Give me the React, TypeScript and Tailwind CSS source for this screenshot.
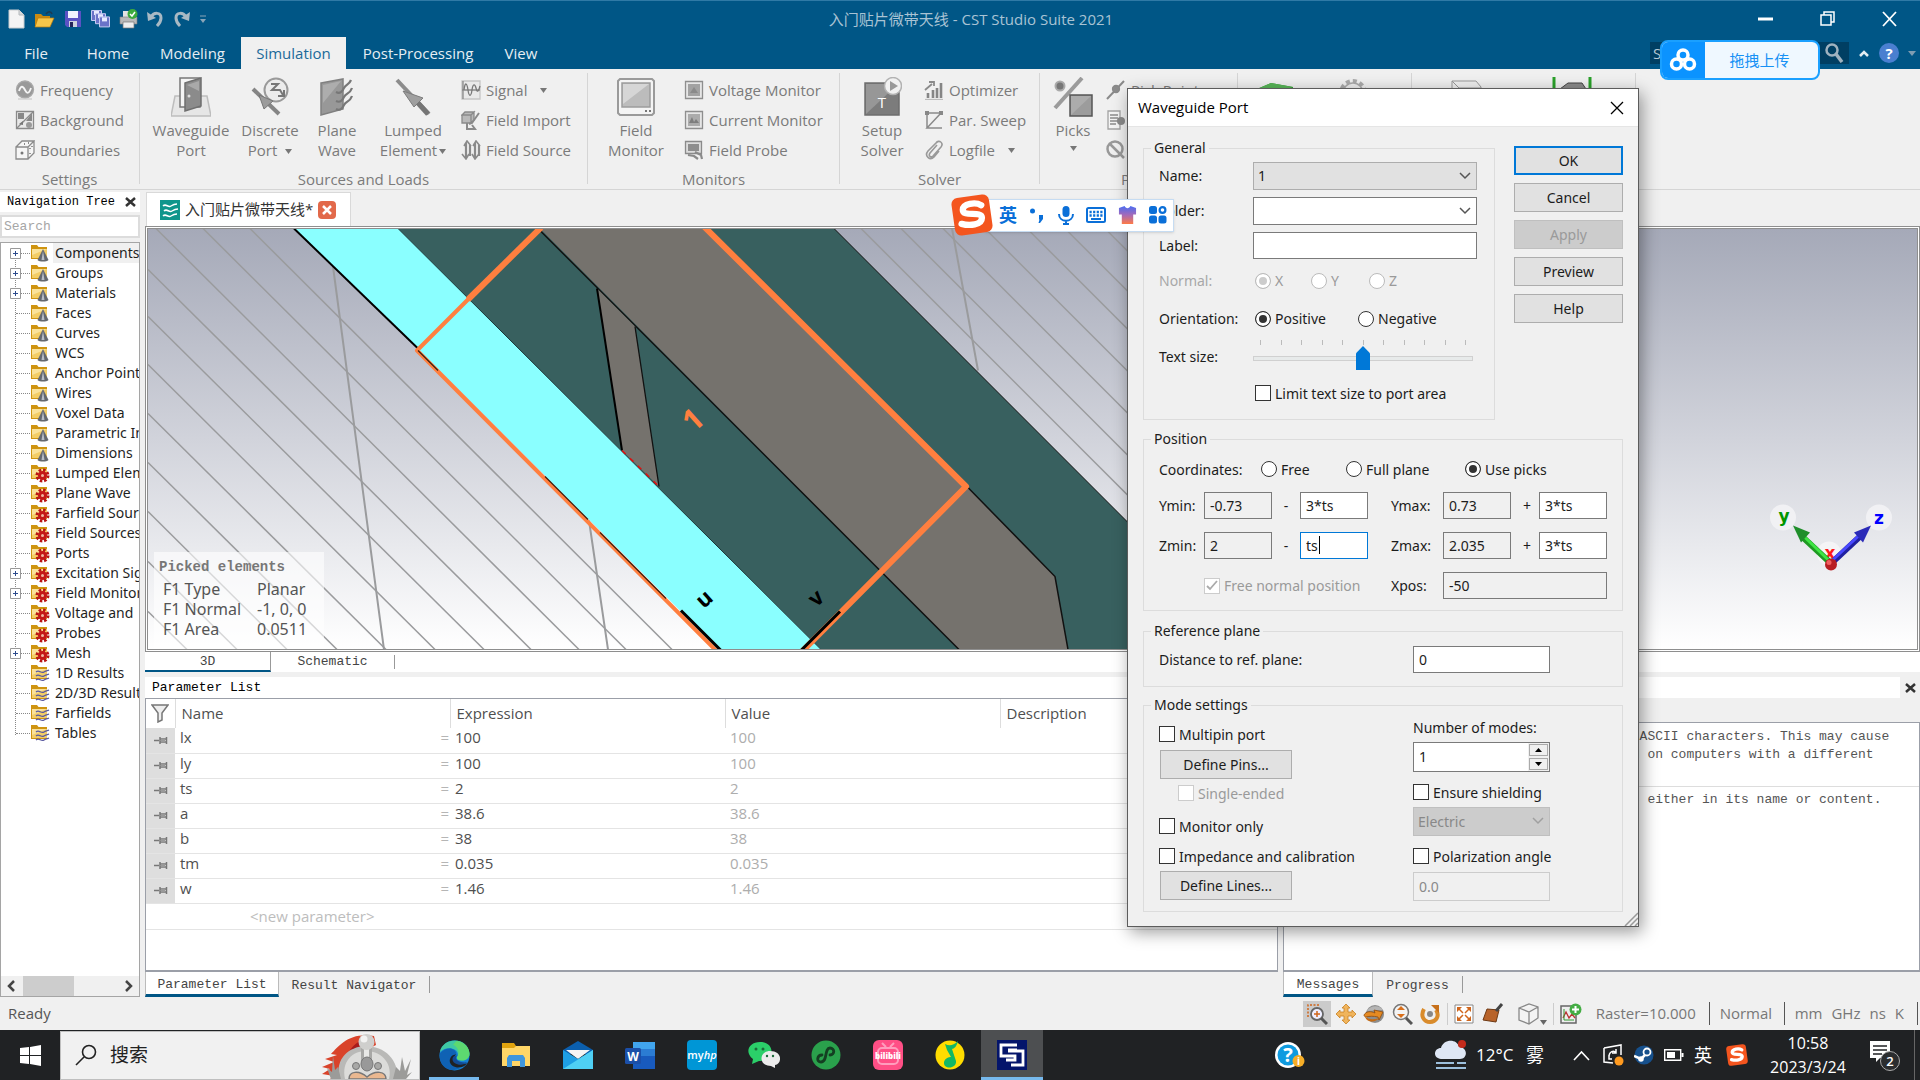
import type { ReactNode } from "react";

const UI = "font-['Open_Sans','Noto_Sans_CJK_SC',sans-serif]";
const MONO = "font-['Liberation_Mono','Noto_Sans_CJK_SC',monospace]";
const NOTO = "font-['Noto_Sans',sans-serif]";

type TreeItem = { label: string; kind: "cone" | "gear" | "wave"; open?: boolean };

const tree: TreeItem[] = [
  { label: "Components", kind: "cone", open: true },
  { label: "Groups", kind: "cone", open: true },
  { label: "Materials", kind: "cone", open: true },
  { label: "Faces", kind: "cone" },
  { label: "Curves", kind: "cone" },
  { label: "WCS", kind: "cone" },
  { label: "Anchor Points", kind: "cone" },
  { label: "Wires", kind: "cone" },
  { label: "Voxel Data", kind: "cone" },
  { label: "Parametric Int", kind: "cone" },
  { label: "Dimensions", kind: "cone" },
  { label: "Lumped Elements", kind: "gear" },
  { label: "Plane Wave", kind: "gear" },
  { label: "Farfield Source", kind: "gear" },
  { label: "Field Sources", kind: "gear" },
  { label: "Ports", kind: "gear" },
  { label: "Excitation Signals", kind: "gear", open: true },
  { label: "Field Monitors", kind: "gear", open: true },
  { label: "Voltage and", kind: "gear" },
  { label: "Probes", kind: "gear" },
  { label: "Mesh", kind: "gear", open: true },
  { label: "1D Results", kind: "wave" },
  { label: "2D/3D Results", kind: "wave" },
  { label: "Farfields", kind: "wave" },
  { label: "Tables", kind: "wave" },
];

const params = [
  ["lx", "100"],
  ["ly", "100"],
  ["ts", "2"],
  ["a", "38.6"],
  ["b", "38"],
  ["tm", "0.035"],
  ["w", "1.46"],
];

/* ---------- title bar ---------- */

function QuickAccess() {
  return (
    <div className="flex w-[230px] items-center gap-[9px] pl-2">
      <button aria-label="New">
        <svg width="17" height="20" viewBox="0 0 17 20">
          <path d="M1 1h10l5 5v13H1z" fill="#f4f4f4" stroke="#c9cdd0" />
          <path d="M11 1v5h5" fill="#d6d9db" stroke="#b5babd" />
        </svg>
      </button>
      <button aria-label="Open">
        <svg width="21" height="19" viewBox="0 0 21 19">
          <path d="M1 4h6l2 2h7v11H1z" fill="#c88a12" />
          <path d="M4 8h16l-4 9H1z" fill="#f7c64a" stroke="#b97d0c" strokeWidth=".7" />
          <path d="M12 4c2-3 5-3 6 0" fill="none" stroke="#1d3a52" strokeWidth="1.6" />
        </svg>
      </button>
      <button aria-label="Save">
        <svg width="18" height="18" viewBox="0 0 18 18">
          <path d="M1 1h16v16H3l-2-2z" fill="#5a52c4" />
          <path d="M4 1h10v7H4z" fill="#f0f2ff" />
          <path d="M5 11h8v6H5z" fill="#cfd2dd" />
          <path d="M6 12h3v5H6z" fill="#23235a" />
        </svg>
      </button>
      <button aria-label="Save all">
        <svg width="19" height="18" viewBox="0 0 19 18">
          {[0, 4, 8].map((o) => (
            <g key={o}>
              <path d={`M${o + 0.5} ${o * 0.8 + 0.5}h10v10h-10z`} fill="#6a73c8" stroke="#c5cbf2" />
              <path d={`M${o + 3} ${o * 0.8 + 1}h5v4h-5z`} fill="#e8ebff" />
            </g>
          ))}
        </svg>
      </button>
      <button aria-label="Print">
        <svg width="19" height="20" viewBox="0 0 19 20">
          <path d="M4 2h10v6H4z" fill="#e3e3e3" />
          <path d="M1 8h17v7H1z" fill="#b9b9b9" stroke="#7c7c7c" strokeWidth=".6" />
          <path d="M4 13h11v6H4z" fill="#efefef" stroke="#777" strokeWidth=".7" />
          <circle cx="13.500" cy="5" r="5" fill="#3cab3c" />
          <path d="M11 5l2 2 3-4" fill="none" stroke="#fff" strokeWidth="1.500" />
        </svg>
      </button>
      <button aria-label="Undo">
        <svg width="17" height="18" viewBox="0 0 17 18">
          <path d="M4 7C7 2 14 2 14 8c0 4-2 6-4 8" fill="none" stroke="#a9b9c4" strokeWidth="3" />
          <path d="M0 2l1 9 8-3z" fill="#a9b9c4" />
        </svg>
      </button>
      <button aria-label="Redo">
        <svg width="17" height="18" viewBox="0 0 17 18">
          <path d="M13 7C10 2 3 2 3 8c0 4 2 6 4 8" fill="none" stroke="#a9b9c4" strokeWidth="3" />
          <path d="M17 2l-1 9-8-3z" fill="#a9b9c4" />
        </svg>
      </button>
      <svg width="8" height="9" viewBox="0 0 8 9">
        <path d="M1 1h6" stroke="#8aa5b8" />
        <path d="M1 4h6l-3 4z" fill="#8aa5b8" />
      </svg>
    </div>
  );
}

function TitleBar() {
  return (
    <header className="shrink-0 border-t border-[#2f7aa6] bg-[#005686]">
      <div className="flex h-9 items-center">
        <QuickAccess />
        <h1 className="flex-1 text-center text-[15px] text-[#a9c3d4]">入门贴片微带天线 - CST Studio Suite 2021</h1>
        <div className="flex w-[208px] items-center justify-end gap-[47px] pr-[23px] text-white">
          <button aria-label="Minimize">
            <svg width="15" height="16"><path d="M0 8h15" stroke="#fff" strokeWidth="3" /></svg>
          </button>
          <button aria-label="Restore">
            <svg width="15" height="16" fill="none" stroke="#fff" strokeWidth="1.500">
              <path d="M1 4h10v10H1zM4 4V1h10v10h-3" />
            </svg>
          </button>
          <button aria-label="Close">
            <svg width="15" height="16" stroke="#fff" strokeWidth="1.800"><path d="M1 1l13 14M14 1L1 15" /></svg>
          </button>
        </div>
      </div>
      <div className="flex h-8 items-center">
        <nav className="flex h-full flex-1 text-[15px] text-[#e6eef3]">
          <button className="w-[72px]">File</button>
          <button className="w-[72px]">Home</button>
          <button className="w-[97px]">Modeling</button>
          <button className="w-[105px] bg-[#f0f0f0] text-[#1b6a99]">Simulation</button>
          <button className="w-36">Post-Processing</button>
          <button className="w-[62px]">View</button>
        </nav>
        <div className="flex items-center gap-[9px] pr-1">
          <div className="flex h-[22px] w-[199px] items-center justify-between bg-[#003f63] px-[3px] text-[15px] text-[#b5c9d6]">
            <span>S</span>
            <svg width="22" height="20" viewBox="0 0 22 20" fill="none" stroke="#9fb2bf">
              <circle cx="8" cy="7" r="5.500" strokeWidth="2.500" />
              <path d="M12 11l6 8" strokeWidth="3.500" />
            </svg>
          </div>
          <svg width="12" height="9" viewBox="0 0 12 9"><path d="M2 7l4-4 4 4" fill="none" stroke="#e4edf2" strokeWidth="2.500" /></svg>
          <button aria-label="Help" className="flex h-5 w-5 items-center justify-center rounded-full bg-[#4a7fd0] text-[15px] font-bold text-white">?</button>
          <svg width="8" height="5"><path d="M0 0h8l-4 5z" fill="#7e9db2" /></svg>
        </div>
      </div>
    </header>
  );
}

/* ---------- ribbon ---------- */

const icon18 = { width: 20, height: 20, viewBox: "0 0 20 20", fill: "none", stroke: "#8a8a8a", strokeWidth: 1.3 };
const icon40 = { width: 40, height: 40, viewBox: "0 0 40 40", fill: "none", stroke: "#8a8a8a", strokeWidth: 1.5 };

const I = {
  frequency: (
    <svg {...icon18}>
      <circle cx="10" cy="9.500" r="8.500" fill="#999" stroke="#a8a8a8" />
      <path d="M4 11c2-6 4-5 6-1s4 4 6-2" stroke="#f4f4f4" strokeWidth="1.800" />
      <path d="M3 19h14" stroke="#ccc" />
    </svg>
  ),
  background: (
    <svg {...icon18}>
      <path d="M1.500 1.500h17v17h-17z" fill="#e8e8e8" />
      <path d="M3 3h6v6H3zM11 11l6-8v8z" fill="#888" stroke="none" />
      <path d="M2 18L18 2" />
      <circle cx="14" cy="15" r="3" fill="#999" stroke="none" />
      <path d="M4 14l4-3v4z" fill="#777" stroke="none" />
    </svg>
  ),
  boundaries: (
    <svg {...icon18}>
      <path d="M1 7h12v12H1zM1 7l6-6h12l-6 6M19 1v12l-6 6" fill="#f6f6f6" />
      <circle cx="7" cy="13" r="1.500" fill="#777" stroke="none" />
      <path d="M15 8v1M17 6v1M9 4h1M13 3h1M15 13v1" strokeWidth="1.800" />
    </svg>
  ),
  signal: (
    <svg {...icon18}>
      <path d="M1 1h18v18H1z" fill="#e9e9e9" stroke="#c5c5c5" />
      <path d="M2 1v18M1 10h18" />
      <path d="M3 10c1-9 3-7 4 0s3 7 4 0 3-6 4-2 2 5 4-2" stroke="#777" />
    </svg>
  ),
  fieldImport: (
    <svg {...icon18}>
      <path d="M1 5l3-3h9l-3 3zM1 5h9v8H1zM10 5l3-3v8l-3 3" fill="#b9b9b9" />
      <path d="M6 13v6h8l-3-4M18 3l-7 10-3 1" stroke="#8a8a8a" strokeWidth="2" />
    </svg>
  ),
  fieldSource: (
    <svg {...icon18}>
      <path d="M5 18V3M14 18V3M9 16V5M18 16V5" strokeWidth="2.200" />
      <path d="M1 14l4 5 3-5M11 14l3 5 4-5M3 6l3-5 4 5M12 6l3-5 4 5" strokeWidth="1.600" />
    </svg>
  ),
  voltage: (
    <svg {...icon18}>
      <path d="M1.500 1.500h17v17h-17z" fill="#e6e6e6" stroke="#8e8e8e" />
      <path d="M4 4h12v12H4z" fill="#a2a2a2" stroke="none" />
      <path d="M6 13l4-6 4 6z" fill="#8a8a8a" stroke="none" />
    </svg>
  ),
  current: (
    <svg {...icon18}>
      <path d="M1.500 1.500h17v17h-17z" fill="#e6e6e6" stroke="#8e8e8e" />
      <path d="M4 4h12v12H4z" fill="#ababab" stroke="none" />
      <path d="M5 13l3-6 2 5 2-3 3 4z" fill="#7d7d7d" stroke="none" />
    </svg>
  ),
  probe: (
    <svg {...icon18}>
      <path d="M1.500 1.500h16v12h-16z" fill="#dcdcdc" />
      <path d="M4 4h11v7H4z" fill="#8d8d8d" stroke="none" />
      <path d="M4 15l6 1 4 3M11 12l6 3 1 4" strokeWidth="2.200" />
    </svg>
  ),
  optimizer: (
    <svg {...icon18}>
      <path d="M4 18v-5M9 18v-8M13 18V8M17 18V3" strokeWidth="2.600" stroke="#858585" />
      <path d="M1 10l7-6M5 2h5v4" strokeWidth="1.800" />
      <path d="M1 19.500h18" stroke="#bbb" />
    </svg>
  ),
  sweep: (
    <svg {...icon18}>
      <path d="M3 18V3h14L3 18h15" strokeWidth="1.500" />
      <path d="M1 1h4v4H1zM15 1h4v4h-4z" fill="#888" stroke="none" />
    </svg>
  ),
  logfile: (
    <svg {...icon18}>
      <path d="M13 5L6 13c-2 3 1 5 3 3l8-9c3-4-2-8-5-4L4 11c-4 5 2 10 6 6l5-6" stroke="#999" strokeWidth="1.600" />
    </svg>
  ),
  pickPoints: (
    <svg {...icon18}>
      <path d="M1 19L18 1" strokeWidth="2" />
      <circle cx="10" cy="9" r="3.500" fill="#8c8c8c" />
    </svg>
  ),
  pickLists: (
    <svg {...icon18}>
      <path d="M2 1h12v18H2z" fill="#f4f4f4" stroke="#a2a2a2" />
      <path d="M4 5h8M4 8h8M4 11h8M4 14h6" />
      <circle cx="15" cy="11" r="4" fill="#8a8a8a" stroke="none" />
    </svg>
  ),
  clearPicks: (
    <svg {...icon18}>
      <circle cx="9" cy="9" r="7.500" strokeWidth="2.500" stroke="#999" />
      <path d="M4 4l14 14" strokeWidth="2.500" stroke="#999" />
    </svg>
  ),
  waveguide: (
    <svg {...icon40}>
      <path d="M4 19h32l4 20H0z" fill="#e6e6e6" stroke="#bdbdbd" />
      <path d="M9 1h20v29H9z" fill="#f4f4f4" stroke="#777" />
      <path d="M14 6L30 1v28l-16 5z" fill="#8b8b8b" stroke="#6f6f6f" />
      <path d="M16 8l12-4v10z" fill="#a9a9a9" stroke="none" />
      <circle cx="18" cy="19" r="1.500" fill="#ddd" stroke="none" />
    </svg>
  ),
  discrete: (
    <svg {...icon40}>
      <circle cx="26" cy="13" r="11.500" fill="#ececec" stroke="#9a9a9a" strokeWidth="2" />
      <path d="M21 7h7l-6 6h8l3 5M34 13v6h-6" strokeWidth="2" stroke="#777" />
      <path d="M3 12l26 25" stroke="#858585" strokeWidth="4" />
      <path d="M9 18l14 6-9 8z" fill="#9b9b9b" stroke="#777" strokeWidth="1" />
    </svg>
  ),
  plane: (
    <svg {...icon40}>
      <path d="M4 6l22-4v30L4 38z" fill="#989898" stroke="#808080" />
      <path d="M6 8l18-4L6 26z" fill="#adadad" stroke="none" />
      <path d="M19 15c4 2 6 0 8-4s5-3 7-8M19 24c4 2 6 0 8-4s6-3 8-9M19 32c4 2 6 0 8-4s6-3 8-9" strokeWidth="2.200" stroke="#777" />
    </svg>
  ),
  lumped: (
    <svg {...icon40}>
      <path d="M4 3l32 34" stroke="#8c8c8c" strokeWidth="4" />
      <path d="M10 14l20 7-9 9z" fill="#9f9f9f" stroke="#7c7c7c" strokeWidth="1" />
      <path d="M25 26l10 11" stroke="#757575" strokeWidth="5" />
    </svg>
  ),
  fieldMonitor: (
    <svg {...icon40}>
      <path d="M4 2h32l2 2v32l-2 2H4l-2-2V4z" fill="#f4f4f4" stroke="#9a9a9a" strokeWidth="2" />
      <path d="M6 6h28v24H6z" fill="#bcbcbc" stroke="#9c9c9c" />
      <path d="M7 7h26L7 27z" fill="#d6d6d6" stroke="none" />
      <path d="M29 34h2M33 34h2" stroke="#777" strokeWidth="2" />
    </svg>
  ),
  picks: (
    <svg {...icon40}>
      <path d="M2 31L29 1" stroke="#9b9b9b" strokeWidth="4" />
      <circle cx="7" cy="9" r="4.500" fill="#777" stroke="#aaa" strokeWidth="2" />
      <path d="M17 18h22v21H17z" fill="#9c9c9c" stroke="#555" />
      <path d="M18 19h20L18 38z" fill="#acacac" stroke="none" />
    </svg>
  ),
};

const Caret = () => (
  <svg width="7" height="5" className="ml-2 inline-block align-middle">
    <path d="M0 0h7l-3.500 5z" fill="#777" />
  </svg>
);

function Small({ icon, children, caret }: { icon: ReactNode; children: ReactNode; caret?: boolean }) {
  return (
    <button className="flex h-[30px] items-center gap-[5px] whitespace-nowrap">
      {icon}
      <span>{children}</span>
      {caret && <Caret />}
    </button>
  );
}

function Big({ icon, className, children }: { icon: ReactNode; className: string; children: ReactNode }) {
  return (
    <button className={`flex flex-col items-center pt-0.5 leading-5 ${className}`}>
      {icon}
      <span className="mt-[3px]">{children}</span>
    </button>
  );
}

function Group({ label, className, children }: { label: string; className: string; children?: ReactNode }) {
  return (
    <section className={`flex h-[111px] shrink-0 flex-col border-r border-[#d5d5d5] pt-0.5 ${className}`}>
      <div className="flex h-[90px] items-start">{children}</div>
      <h2 className="text-center leading-7">{label}</h2>
    </section>
  );
}

function Ribbon() {
  return (
    <div className="flex h-[121px] shrink-0 overflow-hidden border-b border-[#d5d5d5] pt-1 text-[15px] text-[#7b7b7b]">
      <Group label="Settings" className="w-[140px]">
        <div className="pl-[15px] pr-2">
          <Small icon={I.frequency}>Frequency</Small>
          <Small icon={I.background}>Background</Small>
          <Small icon={I.boundaries}>Boundaries</Small>
        </div>
      </Group>
      <Group label="Sources and Loads" className="w-[448px]">
        <div className="w-[9px]" />
        <Big icon={I.waveguide} className="w-[84px]">Waveguide<br />Port</Big>
        <Big icon={I.discrete} className="w-[74px]">Discrete<br />Port<Caret /></Big>
        <Big icon={I.plane} className="w-[60px]">Plane<br />Wave</Big>
        <Big icon={I.lumped} className="w-[92px]">Lumped<br />Element<svg width="7" height="5" className="ml-0.5 inline-block align-middle"><path d="M0 0h7l-3.500 5z" fill="#777" /></svg></Big>
        <div className="pl-0.5">
          <Small icon={I.signal} caret>Signal</Small>
          <Small icon={I.fieldImport}>Field Import</Small>
          <Small icon={I.fieldSource}>Field Source</Small>
        </div>
      </Group>
      <Group label="Monitors" className="w-[252px]">
        <Big icon={I.fieldMonitor} className="ml-2 w-20">Field<br />Monitor</Big>
        <div className="pl-2">
          <Small icon={I.voltage}>Voltage Monitor</Small>
          <Small icon={I.current}>Current Monitor</Small>
          <Small icon={I.probe}>Field Probe</Small>
        </div>
      </Group>
      <Group label="Solver" className="w-[200px]">
        <Big
          className="ml-[7px] w-[70px]"
          icon={
            <svg {...icon40}>
              <path d="M3 6h34v32H3z" fill="#7c7c7c" stroke="#6e6e6e" />
              <path d="M4 7h32L4 37z" fill="#979797" stroke="none" />
              <text x="20" y="31" textAnchor="middle" fontSize="15" fill="#fff" stroke="none">T</text>
              <circle cx="31" cy="9" r="8.500" fill="#f1f1f1" stroke="#b2b2b2" />
              <path d="M28 4l8 5-8 5z" fill="#999" stroke="none" />
            </svg>
          }
        >
          Setup<br />Solver
        </Big>
        <div className="pl-[7px]">
          <Small icon={I.optimizer}>Optimizer</Small>
          <Small icon={I.sweep}>Par. Sweep</Small>
          <Small icon={I.logfile} caret>Logfile</Small>
        </div>
      </Group>
      <Group label="Picks" className="w-[198px]">
        <Big icon={I.picks} className="ml-1.5 w-[54px]">
          Picks<br />
          <svg width="7" height="5" className="mx-auto mt-1.5"><path d="M0 0h7l-3.500 5z" fill="#777" /></svg>
        </Big>
        <div className="pl-1.5">
          <Small icon={I.pickPoints} caret>Pick Points</Small>
          <Small icon={I.pickLists}>Pick Lists</Small>
          <Small icon={I.clearPicks}>Clear Picks</Small>
        </div>
      </Group>
      <Group label="" className="w-[174px]">
        <svg width="160" height="40" viewBox="0 0 160 40" className="mt-0.5">
          <path d="M19 12l14-6 22 4v20H19z" fill="#2f9a2f" />
          <path d="M19 12l14-6 22 4-14 4z" fill="#58b558" />
          <circle cx="115" cy="16" r="12" fill="#eee" stroke="#aaa" strokeWidth="4" strokeDasharray="4 3" />
          <circle cx="115" cy="16" r="10" fill="#eee" stroke="#aaa" strokeWidth="1.500" />
        </svg>
      </Group>
      <Group label="" className="w-[224px]">
        <svg width="200" height="40" viewBox="0 0 200 40" className="mt-0.5">
          <path d="M40 4h24l5 6v20H40zM40 4l7 7h22M47 11v20" fill="#eee" stroke="#999" />
          <path d="M142 0v30M178 0v30" stroke="#2aa02a" strokeWidth="3" />
          <path d="M148 12l8-6h14l4 6v10h-26z" fill="#8b8b8b" stroke="#444" />
        </svg>
      </Group>
    </div>
  );
}

/* ---------- navigation tree ---------- */

function TreeIcon({ kind }: { kind: TreeItem["kind"] }) {
  return (
    <svg width="20" height="20" viewBox="0 0 20 20" className="shrink-0">
      <path d="M1 2h6l1.500 2H17v12H1z" fill="#cf9410" />
      <path d="M2 6h15v9H2z" fill="#f3cd66" />
      <path d="M2 6h15L2 12z" fill="#fae29a" />
      {kind === "cone" && (
        <>
          <path d="M13 6l5.500 11c-2 2-9 2-11 0z" fill="#65696f" />
          <path d="M13 8l1.500 9h-3z" fill="#b9bec6" />
        </>
      )}
      {kind === "gear" && (
        <>
          <circle cx="12.500" cy="12.500" r="5.500" fill="none" stroke="#b81414" strokeWidth="3" strokeDasharray="2.500 1.800" />
          <circle cx="12.500" cy="12.500" r="4.500" fill="#c41818" />
          <circle cx="12.500" cy="12.500" r="1.500" fill="#f0b8a0" />
        </>
      )}
      {kind === "wave" && (
        <path d="M6 9c3-3 5 2 8 0s3-1 5-2M6 13c3-3 5 2 8 0s3-1 5-2M6 17c3-3 5 2 8 0s3-1 5-2" fill="none" stroke="#5a5aa0" strokeWidth="1.300" />
      )}
    </svg>
  );
}

function NavigationTree() {
  return (
    <aside className="flex w-[140px] shrink-0 flex-col">
      <div className="mt-0.5 flex h-5 items-center justify-between bg-white pl-[7px] pr-1 text-[12px] text-black">
        <h2 className={`whitespace-nowrap font-medium ${MONO}`}>Navigation Tree</h2>
        <button aria-label="Close navigation tree">
          <svg width="11" height="10" stroke="#333" strokeWidth="2.500"><path d="M1 1l9 8M10 1L1 9" /></svg>
        </button>
      </div>
      <input
        aria-label="Search tree"
        placeholder="Search"
        className={`mt-[3px] h-[23px] w-full border-2 border-[#dcdcdc] bg-white px-[2px] text-[13px] placeholder:text-[#a6a6a6] ${MONO}`}
      />
      <div className="mt-1 flex min-h-0 flex-1 flex-col border border-[#a5a5a5] bg-white">
        <ul className={`relative flex-1 overflow-hidden text-[14px] text-[#1f1f1f] ${NOTO}`}>
          <li aria-hidden className="absolute left-[14px] top-3 h-[480px] border-l border-dotted border-[#888]" />
          {tree.map((t, i) => (
            <li key={t.label} className="relative flex h-5 items-center whitespace-nowrap pl-[9px]">
              <span className="flex w-5 shrink-0 items-center">
                {t.open ? (
                  <svg width="11" height="11" viewBox="0 0 11 11">
                    <path d="M.5.5h10v10H.500z" fill="#fff" stroke="#999" />
                    <path d="M3 5.500h5M5.500 3v5" stroke="#2c4a8c" />
                  </svg>
                ) : (
                  <span className="w-[6px]" />
                )}
                <span className="h-px flex-1 border-t border-dotted border-[#888]" />
              </span>
              <TreeIcon kind={t.kind} />
              <span className={i === 0 ? "ml-[3px] bg-[#f0f0f0] pl-0.5 leading-5" : "pl-[5px] leading-5"}>{t.label}</span>
            </li>
          ))}
        </ul>
        <div className="flex h-5 items-center bg-[#f0f0f0] px-1.5">
          <svg width="8" height="12" fill="none" stroke="#444" strokeWidth="2.500"><path d="M7 1L2 6l5 5" /></svg>
          <div className="ml-2 h-full w-[51px] bg-[#cdcdcd]" />
          <div className="flex-1" />
          <svg width="8" height="12" fill="none" stroke="#444" strokeWidth="2.500"><path d="M1 1l5 5-5 5" /></svg>
        </div>
      </div>
    </aside>
  );
}

/* ---------- 3D view ---------- */

// left edge / bottom edge pairs of the ground grid
const gridLeft = [
  [148, 611, 187], [148, 561, 237], [148, 511, 287], [148, 462, 337], [148, 413, 386], [148, 364, 435],
  [148, 316, 484], [148, 269, 531], [156, 228, 579], [203, 228, 626], [250, 228, 672],
];
const gridRight = [861, 901, 943, 985, 1027, 1065, 1105];

function Scene() {
  return (
    <svg className="absolute inset-0 h-full w-full" viewBox="148 228 1769 421" preserveAspectRatio="xMidYMid slice">
      <defs>
        <linearGradient id="sky" x1="0" y1="0" x2="0" y2="1">
          <stop offset="0" stopColor="#a5a9b8" />
          <stop offset=".5" stopColor="#d1d3db" />
          <stop offset="1" stopColor="#ffffff" />
        </linearGradient>
      </defs>
      <rect x="148" y="228" width="1769" height="421" fill="url(#sky)" />
      <g stroke="#9a9b9d" strokeWidth="1.500">
        {gridLeft.map(([x, y, b]) => (
          <line key={b} x1={x} y1={y} x2={b} y2="649" />
        ))}
        {gridRight.map((x) => (
          <line key={x} x1={x} y1="228" x2={x + 421} y2="649" />
        ))}
        <path d="M333 266L384 649M952 228l26 142M589 520l19 129" strokeWidth="2" fill="none" />
      </g>
      <path d="M398 228H834L1255 649H821z" fill="#38605f" />
      <path d="M834 228L1255 649" stroke="#111" fill="none" />
      <path d="M540 228H707L966 485L1055 576L1068 649H959z" fill="#75726d" />
      <path d="M540 230L959 649M966 485L1055 576L1068 649" stroke="#111" strokeWidth="1.500" fill="none" />
      <path d="M597 288L635 326L659 486L622 450z" fill="#75726d" />
      <path d="M597 288L622 450" stroke="#000" strokeWidth="2" />
      <path d="M635 326L659 486" stroke="#111" strokeWidth="1.300" />
      <path d="M294 228H398L821 649H719L418 348z" fill="#8affff" />
      <path d="M398 228L821 649" stroke="#163838" fill="none" />
      <path d="M294 228L418 348" stroke="#000" strokeWidth="2" />
      <path d="M622 450l37 36" stroke="#e01010" strokeWidth="1.500" strokeDasharray="5 6" />
      <g stroke="#ff7f3f" fill="none" strokeLinejoin="round">
        <path d="M541 227L468 299" strokeWidth="6" />
        <path d="M470 297L417 350L718 652" strokeWidth="4" />
        <path d="M704 226L966 486L802 651" strokeWidth="6" />
      </g>
      <path d="M418 350l20 20M545 476l43 43M600 532l66 66" stroke="#3a2010" strokeWidth="1.200" />
      <path d="M681 610l40 40M840 611L801 650" stroke="#000" strokeWidth="3" />
      <g fontFamily="Noto Sans, sans-serif" fontWeight="700" textAnchor="middle">
        <text x="700" y="427" fontSize="30" fill="#ff7f3f" transform="rotate(-42 700 427)">1</text>
        <text x="709" y="604" fontSize="22" transform="rotate(-42 709 604)">u</text>
        <text x="821" y="603" fontSize="22" transform="rotate(-42 821 603)">v</text>
      </g>
      <g fontFamily="DejaVu Sans, sans-serif" fontWeight="700" fontSize="17" textAnchor="middle">
        <circle cx="1783" cy="517" r="13" fill="#f1f1f4" />
        <circle cx="1879" cy="517" r="13" fill="#f1f1f4" />
        <circle cx="1829" cy="553" r="12" fill="#f4f4f6" />
        <text x="1784" y="521" fill="#009600">y</text>
        <text x="1879" y="523" fill="#0000ff">z</text>
        <text x="1830" y="558" fill="#ff1a1a">x</text>
      </g>
      <path d="M1831 563L1802 536" stroke="#1e9a22" strokeWidth="6" />
      <path d="M1831 562L1803 535" stroke="#3fe544" strokeWidth="3" />
      <path d="M1793 525l17 7-9 10z" fill="#1f8e2a" />
      <path d="M1831 563l29-27" stroke="#2020a0" strokeWidth="6" />
      <path d="M1830 562l29-27" stroke="#4848ff" strokeWidth="3" />
      <path d="M1871 525l-17 7 9 10z" fill="#2a2ab8" />
      <circle cx="1831" cy="564" r="6" fill="#b81f24" />
      <circle cx="1829" cy="562" r="2.500" fill="#f06060" />
    </svg>
  );
}

function Viewport() {
  return (
    <div className="flex min-h-0 flex-1 flex-col">
      <div className="flex h-9 items-end">
        <div className="ml-px flex h-[34px] w-[205px] items-center gap-[5px] border border-b-0 border-[#d9d9d9] bg-white pl-[13px] text-[#333]">
          <svg width="20" height="20" viewBox="0 0 20 20">
            <path d="M0 0h20v20H0z" fill="#0f968c" />
            <path d="M3 6c3-3 5 2 8 0s3-2 6-2M4 11c3-3 5 2 8 0s3-2 6-2M3 16c3-3 5 2 8 0s3-2 6-2" fill="none" stroke="#fff" strokeWidth="1.500" />
          </svg>
          <span className="whitespace-nowrap text-[15px]">入门贴片微带天线*</span>
          <button aria-label="Close document" className="rounded-sm bg-[#e2694a]">
            <svg width="18" height="18" stroke="#fff" strokeWidth="2.500"><path d="M5 5l8 8M13 5l-8 8" /></svg>
          </button>
        </div>
      </div>
      <div className="relative min-h-0 flex-1 overflow-hidden border-[3px] border-double border-[#8e8e8e] bg-white">
        <Scene />
        <div className="absolute bottom-0 left-1.5 w-[170px] bg-white/60 pb-2.5 pl-[5px] pt-[5px] text-[#555]">
          <h3 className={`text-[14px] font-bold leading-5 text-[#777] ${MONO}`}>Picked elements</h3>
          <dl className={`grid grid-cols-[94px_1fr] pl-1 pt-0.5 text-[16px] leading-5 ${NOTO}`}>
            <dt>F1 Type</dt><dd>Planar</dd>
            <dt>F1 Normal</dt><dd>-1, 0, 0</dd>
            <dt>F1 Area</dt><dd>0.0511</dd>
          </dl>
        </div>
      </div>
      <div className={`flex h-5 shrink-0 bg-white text-[13px] text-[#444] ${MONO}`}>
        <button className="w-[126px] border-b-2 border-r border-b-[#005686] border-r-[#999]">3D</button>
        <button className="my-[3px] w-[124px] border-r border-[#999] text-center leading-[14px]">Schematic</button>
      </div>
    </div>
  );
}

/* ---------- docked panels ---------- */

function ParameterPanel() {
  return (
    <section className="flex w-[1133px] shrink-0 flex-col">
      <h2 className={`h-[21px] bg-white pl-[7px] text-[13px] leading-[22px] text-black ${MONO}`}>Parameter List</h2>
      <div className="flex-1 border border-b-2 border-[#9b9fa8] bg-white">
        <table className="w-full table-fixed border-collapse text-left text-[15px] text-[#4f4f4f]">
          <colgroup>
            <col className="w-[29px]" />
            <col className="w-[275px]" />
            <col className="w-[275px]" />
            <col className="w-[275px]" />
            <col />
          </colgroup>
          <thead>
            <tr className="h-[29px]">
              <th aria-label="Filter" className="border-r border-[#ddd] pl-[5px]">
                <svg width="18" height="19" viewBox="0 0 18 19"><path d="M1 1h16l-6 8v7l-4 2V9z" fill="#eee" stroke="#777" strokeWidth="1.500" /></svg>
              </th>
              <th className="border-r border-[#ddd] pl-[6px] font-normal">Name</th>
              <th className="border-r border-[#ddd] pl-[6px] font-normal">Expression</th>
              <th className="border-r border-[#ddd] pl-[6px] font-normal">Value</th>
              <th className="pl-[6px] font-normal">Description</th>
            </tr>
          </thead>
          <tbody>
            {params.map(([name, value]) => (
              <tr key={name} className="h-[25px] border-b border-[#e4e4e4] leading-[18px]">
                <td className="bg-[#dedede] pl-2">
                  <svg width="14" height="9" viewBox="0 0 14 9"><path d="M0 4.500h5M6 1v7M6 3h6M6 6h6M12.500 1v7" stroke="#777" strokeWidth="1.500" fill="none" /><path d="M7 3h4v3H7z" fill="#999" /></svg>
                </td>
                <td className="pb-1.5 pl-[5px]">
                  <span className="flex justify-between pr-px"><span>{name}</span><span className="text-[#b5b5b5]">=</span></span>
                </td>
                <td className="pb-1.5 pl-[5px]">{value}</td>
                <td className="pb-1.5 pl-[5px] text-[#adadad]">{value}</td>
                <td />
              </tr>
            ))}
            <tr className="h-[26px] border-b border-[#e4e4e4] leading-5 text-[#bdbdbd]">
              <td />
              <td className="pl-[75px]">&lt;new parameter&gt;</td>
              <td /><td /><td />
            </tr>
          </tbody>
        </table>
      </div>
      <div className={`flex h-[25px] text-[13px] text-[#444] ${MONO}`}>
        <button className="w-[134px] border-x border-b-[3px] border-b-[#005686] border-x-[#bbb] bg-white pt-[3px]">Parameter List</button>
        <button className="my-1 w-[151px] border-r border-[#999] font-medium">Result Navigator</button>
      </div>
    </section>
  );
}

function MessagePanel() {
  return (
    <section className={`flex min-w-0 flex-1 flex-col text-[13px] ${MONO}`}>
      <div className="flex h-[21px] items-center">
        <div className="h-full flex-1 bg-white" />
        <button aria-label="Close messages" className="w-5 pl-[5px]">
          <svg width="11" height="10" stroke="#333" strokeWidth="2.500"><path d="M1 1l9 8M10 1L1 9" /></svg>
        </button>
      </div>
      <div className="mt-6 flex-1 overflow-hidden border border-b-2 border-[#9b9fa8] bg-white pt-[5px] leading-[18px] text-[#555]">
        <p className="whitespace-pre border-b border-[#ddd] pb-[22px] pl-[340px]">{"  ASCII characters. This may cause\n d on computers with a different"}</p>
        <p className="whitespace-pre pl-[340px] pt-1">{"rs either in its name or content."}</p>
      </div>
      <div className="flex h-[25px] text-[#444]">
        <button className="w-[90px] border-x border-b-[3px] border-b-[#005686] border-x-[#bbb] bg-white pt-[3px]">Messages</button>
        <button className="my-1 w-[90px] border-r border-[#999]">Progress</button>
      </div>
    </section>
  );
}

function StatusBar() {
  return (
    <footer className="flex h-[33px] shrink-0 items-center pl-2 text-[15px] text-[#777]">
      <span className="flex-1 text-[#555]">Ready</span>
      <div className="flex items-center gap-1">
        <button aria-label="Zoom" className="flex h-[26px] w-7 items-center justify-center bg-[#cbcbcb]">
          <svg width="22" height="22" viewBox="0 0 22 22">
            <path d="M2 14V2h12" fill="none" stroke="#d0661c" strokeWidth="1.500" strokeDasharray="2 1.500" />
            <circle cx="11" cy="11" r="6" fill="#eef" stroke="#666" strokeWidth="1.800" />
            <path d="M15 15l6 6" stroke="#555" strokeWidth="3" />
            <path d="M8 11h6M11 8v6" stroke="#d0661c" strokeWidth="1.500" />
          </svg>
        </button>
        <button aria-label="Pan">
          <svg width="22" height="22" viewBox="0 0 22 22" fill="#f0b45c" stroke="#c98222" strokeWidth=".8">
            <path d="M11 1l4 4h-2v4h4V7l4 4-4 4v-2h-4v4h2l-4 4-4-4h2v-4H5v2l-4-4 4-4v2h4V5H7z" />
          </svg>
        </button>
        <button aria-label="Rotate" className="ml-0.5">
          <svg width="22" height="22" viewBox="0 0 22 22">
            <circle cx="12" cy="11" r="9" fill="#8d8d8d" />
            <path d="M4 8c3-6 13-6 16-1z" fill="#b5b5b5" />
            <path d="M1 12c2-4 7-4 11-2l-1-3 9 2-4 8-1-3c-5-1-8-1-12 0-1 0-2-1-2-2z" fill="#e58a22" stroke="#8e4a0d" strokeWidth=".8" />
            <path d="M2 13c3 4 9 4 14 2-3 5-13 5-14-2z" fill="#c46c16" />
          </svg>
        </button>
        <button aria-label="Dynamic zoom" className="ml-0.5">
          <svg width="22" height="22" viewBox="0 0 22 22">
            <circle cx="10" cy="9" r="7.500" fill="#f3f3f3" stroke="#777" strokeWidth="1.500" />
            <path d="M15 15l6 6" stroke="#555" strokeWidth="3" />
            <path d="M10 3l4 4H6zM10 15l4-4H6z" fill="#d86f1b" />
          </svg>
        </button>
        <button aria-label="Rotate view" className="ml-0.5">
          <svg width="22" height="22" viewBox="0 0 22 22">
            <path d="M5 6c-4 7 0 13 6 13s10-6 6-12" fill="none" stroke="#d98b2b" strokeWidth="4" />
            <path d="M12 2h8v8z" fill="#c7701a" />
            <circle cx="11" cy="11" r="3" fill="#888" />
          </svg>
        </button>
        <span className="mx-0.5 h-[22px] w-px bg-[#ccc]" />
        <button aria-label="Fit">
          <svg width="20" height="20" viewBox="0 0 20 20">
            <path d="M1 1h18v18H1z" fill="#fff" stroke="#888" />
            <path d="M3 3h5L3 8zM17 3h-5l5 5zM3 17h5l-5-5zM17 17h-5l5-5z" fill="#d0661c" />
            <path d="M5 5l4 4M15 5l-4 4M5 15l4-4M15 15l-4-4" stroke="#d0661c" strokeWidth="1.500" />
          </svg>
        </button>
        <button aria-label="Working plane" className="ml-1">
          <svg width="22" height="22" viewBox="0 0 22 22">
            <path d="M5 6l12 1-3 12-13-2z" fill="#b8632a" stroke="#6d3813" />
            <path d="M14 8l6-7" stroke="#444" strokeWidth="3" />
          </svg>
        </button>
        <button aria-label="View mode" className="ml-2.5 flex items-end">
          <svg width="22" height="22" viewBox="0 0 22 22" fill="#f4f4f4" stroke="#888" strokeWidth="1.300">
            <path d="M1 5l10-4 9 3v11l-9 6-10-4zM1 5l10 4 9-5M11 9v12" />
          </svg>
          <svg width="7" height="5"><path d="M0 0h7l-3.500 5z" fill="#666" /></svg>
        </button>
        <span className="mx-0.5 h-[22px] w-px bg-[#ccc]" />
        <button aria-label="Add monitor">
          <svg width="22" height="22" viewBox="0 0 22 22">
            <path d="M1 3h15v17H1z" fill="#eee" stroke="#666" strokeWidth="1.500" />
            <path d="M3 15l3-6 3 6 3-4 3 4" fill="none" stroke="#b33" strokeWidth="1.300" />
            <path d="M4 6v11h10" fill="none" stroke="#393" />
            <circle cx="15.500" cy="6.500" r="6" fill="#44ad44" />
            <path d="M12 6.500h7M15.500 3v7" stroke="#fff" strokeWidth="2" />
          </svg>
        </button>
      </div>
      <div className="ml-3 mr-0.5 flex items-center">
        <span className="w-[116px] border-r border-[#555] pl-0.5">Raster=10.000</span>
        <span className="w-[75px] border-r border-[#555] pl-2.5">Normal</span>
        <span className="flex gap-[9px] border-r border-[#555] pl-2.5 pr-[13px]"><span>mm</span><span>GHz</span><span>ns</span><span>K</span></span>
      </div>
    </footer>
  );
}

/* ---------- port dialog ---------- */

const box = "border border-[#7a7a7a] bg-white px-[5px] text-[14px] leading-5 read-only:bg-[#f0f0f0]";
const pushBtn = "border border-[#adadad] bg-[#e1e1e1] text-center";

function Radio({ name, label, checked, disabled, className = "" }: { name: string; label: string; checked?: boolean; disabled?: boolean; className?: string }) {
  return (
    <label className={`flex items-center gap-1 whitespace-nowrap ${disabled ? "text-[#9a9a9a]" : ""} ${className}`}>
      <input
        type="radio"
        name={name}
        defaultChecked={checked}
        disabled={disabled}
        className="h-4 w-4 appearance-none rounded-full border border-[#333] bg-white checked:bg-[#333] checked:shadow-[inset_0_0_0_3px_#fff] disabled:border-[#bbb] disabled:checked:bg-[#ccc]"
      />
      {label}
    </label>
  );
}

function Check({ label, checked, disabled, className = "" }: { label: string; checked?: boolean; disabled?: boolean; className?: string }) {
  return (
    <label className={`flex items-center gap-1 whitespace-nowrap ${disabled ? "text-[#9a9a9a]" : ""} ${className}`}>
      <span className="relative h-4 w-4">
        <input
          type="checkbox"
          defaultChecked={checked}
          disabled={disabled}
          className="block h-4 w-4 appearance-none border border-[#333] bg-white disabled:border-[#ccc]"
        />
        {checked && (
          <svg width="16" height="16" className="absolute inset-0" fill="none" stroke="#aaa" strokeWidth="1.800"><path d="M3 8l3 3 7-8" /></svg>
        )}
      </span>
      {label}
    </label>
  );
}

function Select({ id, value, disabled, className }: { id: string; value: string; disabled?: boolean; className: string }) {
  return (
    <span className={`relative block ${className}`}>
      <select id={id} aria-label={id} disabled={disabled} className="h-full w-full appearance-none border border-inherit bg-inherit px-1 text-[14px] disabled:opacity-100">
        <option>{value}</option>
      </select>
      <svg width="12" height="8" className="pointer-events-none absolute right-1.5 top-2.5" fill="none" stroke={disabled ? "#a0a0a0" : "#555"} strokeWidth="1.500">
        <path d="M1 1l5 5 5-5" />
      </svg>
    </span>
  );
}

function Fieldset({ legend, className, children }: { legend: string; className: string; children: ReactNode }) {
  return (
    <fieldset className={`min-w-0 border border-[#dcdcdc] pl-[15px] ${className}`}>
      <legend className="-ml-2 h-5 px-[3px] leading-5">{legend}</legend>
      {children}
    </fieldset>
  );
}

function Range({ axis, base, sign, offset, focused }: { axis: string; base: string; sign: string; offset: string; focused?: boolean }) {
  const id = axis.toLowerCase();
  return (
    <div className="flex items-center">
      <label htmlFor={id} className={sign === "-" ? "w-[45px]" : "w-[52px]"}>{axis}:</label>
      <input id={id} readOnly defaultValue={base} className={`h-[27px] w-[68px] ${box}`} />
      <span className={sign === "-" ? "w-7 text-center" : "w-7 pl-1 text-center"}>{sign}</span>
      <span className="relative">
        <input
          aria-label={`${axis} offset`}
          defaultValue={offset}
          className={`h-[27px] w-[68px] ${focused ? "border border-[#0078d7] bg-white px-[5px] text-[14px] leading-5" : box}`}
        />
        {focused && <span className="absolute left-[19px] top-1 h-[18px] w-px bg-black" />}
      </span>
    </div>
  );
}

function PortDialog() {
  return (
    <div role="dialog" aria-label="Waveguide Port" className={`absolute left-[1127px] top-[88px] w-[512px] border border-[#5c5c5c] bg-[#f0f0f0] text-[14px] text-[#1c1c1c] shadow-[3px_5px_16px_rgba(0,0,0,0.4)] ${NOTO}`}>
      <div className={`flex h-[38px] items-center justify-between border-b border-[#e5e5e5] bg-white pl-2.5 pr-3.5 ${UI}`}>
        <h2 className="text-[15px] text-black">Waveguide Port</h2>
        <button aria-label="Close dialog">
          <svg width="14" height="14" stroke="#000" strokeWidth="1.300"><path d="M1 1l12 12M13 1L1 13" /></svg>
        </button>
      </div>
      <div className="px-[15px] pb-3.5 pt-[11px]">
        <div className="flex justify-between">
          <Fieldset legend="General" className="h-[282px] w-[352px]">
            <div className="grid grid-cols-[94px_224px] grid-rows-[35px_35px_34px_37px_39px_36px_38px] items-center">
              <label htmlFor="port-name">Name:</label>
              <Select id="port-name" value="1" className="h-7 border-[#adadad] bg-[#e1e1e1]" />
              <label htmlFor="port-folder">Folder:</label>
              <Select id="port-folder" value="" className="h-7 border-[#7a7a7a] bg-white" />
              <label htmlFor="port-label">Label:</label>
              <input id="port-label" className={`h-[27px] ${box}`} />
              <span className="text-[#a8a8a8]">Normal:</span>
              <div className="flex items-center pl-0.5">
                <Radio name="normal" label="X" checked disabled className="w-14" />
                <Radio name="normal" label="Y" disabled className="w-[58px]" />
                <Radio name="normal" label="Z" disabled />
              </div>
              <span>Orientation:</span>
              <div className="flex pl-0.5">
                <Radio name="orientation" label="Positive" checked className="w-[103px]" />
                <Radio name="orientation" label="Negative" />
              </div>
              <label htmlFor="text-size">Text size:</label>
              <div className="pr-1">
                <div className="flex justify-between px-[7px]">
                  {Array.from({ length: 11 }, (_, i) => (
                    <span key={i} className="h-[5px] w-px bg-[#bbb]" />
                  ))}
                </div>
                <input
                  id="text-size"
                  type="range"
                  defaultValue={50}
                  className="block h-7 w-full appearance-none bg-transparent [&::-webkit-slider-runnable-track]:h-[5px] [&::-webkit-slider-runnable-track]:border [&::-webkit-slider-runnable-track]:border-[#d0d0d0] [&::-webkit-slider-runnable-track]:bg-[#e7eaea] [&::-webkit-slider-thumb]:-mt-[11px] [&::-webkit-slider-thumb]:h-6 [&::-webkit-slider-thumb]:w-3.5 [&::-webkit-slider-thumb]:appearance-none [&::-webkit-slider-thumb]:bg-[#0078d7] [&::-webkit-slider-thumb]:[clip-path:polygon(50%_0,100%_30%,100%_100%,0_100%,0_30%)]"
                />
              </div>
              <span />
              <Check label="Limit text size to port area" className="pl-0.5" />
            </div>
          </Fieldset>
          <div className="flex w-[109px] flex-col gap-2 pt-2">
            <button className="h-[29px] border-2 border-[#0078d7] bg-[#e1e1e1]">OK</button>
            <button className={`h-[29px] ${pushBtn}`}>Cancel</button>
            <button disabled className="h-[29px] border border-[#bfbfbf] bg-[#ccc] text-[#9a9a9a]">Apply</button>
            <button className={`h-[29px] ${pushBtn}`}>Preview</button>
            <button className={`h-[29px] ${pushBtn}`}>Help</button>
          </div>
        </div>

        <Fieldset legend="Position" className="mt-[9px] h-[182px]">
          <div className="flex h-10 items-center">
            <span className="w-[102px]">Coordinates:</span>
            <Radio name="coords" label="Free" className="w-[85px]" />
            <Radio name="coords" label="Full plane" className="w-[119px]" />
            <Radio name="coords" label="Use picks" checked />
          </div>
          <div className="grid grid-cols-[232px_1fr] gap-y-[13px] pt-[3px]">
            <Range axis="Ymin" base="-0.73" sign="-" offset="3*ts" />
            <Range axis="Ymax" base="0.73" sign="+" offset="3*ts" />
            <Range axis="Zmin" base="2" sign="-" offset="ts" focused />
            <Range axis="Zmax" base="2.035" sign="+" offset="3*ts" />
            <Check label="Free normal position" checked disabled className="pl-[45px]" />
            <div className="flex items-center">
              <label htmlFor="xpos" className="w-[52px]">Xpos:</label>
              <input id="xpos" readOnly defaultValue="-50" className={`h-[27px] w-[164px] ${box}`} />
            </div>
          </div>
        </Fieldset>

        <Fieldset legend="Reference plane" className="mt-2.5 h-[66px]">
          <div className="flex items-center pt-[5px]">
            <label htmlFor="ref-distance" className="w-[254px]">Distance to ref. plane:</label>
            <input id="ref-distance" defaultValue="0" className={`h-[27px] w-[137px] ${box}`} />
          </div>
        </Fieldset>

        <Fieldset legend="Mode settings" className="mt-2 h-[217px]">
          <div className="grid grid-cols-[254px_137px] items-start">
            <div className="flex flex-col items-start pt-[7px]">
              <Check label="Multipin port" className="h-6" />
              <button className={`ml-px mt-1 h-[29px] w-[132px] ${pushBtn}`}>Define Pins...</button>
              <Check label="Single-ended" disabled className="h-7 pl-[19px]" />
              <Check label="Monitor only" className="mt-1 h-[30px]" />
              <Check label="Impedance and calibration" className="h-[30px]" />
              <button className={`ml-px h-[29px] w-[132px] ${pushBtn}`}>Define Lines...</button>
            </div>
            <div className="flex flex-col">
              <label htmlFor="mode-count" className="h-[27px] pt-0.5">Number of modes:</label>
              <div className="flex h-[30px] border border-[#7a7a7a] bg-white">
                <input id="mode-count" defaultValue="1" className="w-0 flex-1 px-[5px] text-[14px] leading-5" />
                <div className="flex w-[21px] flex-col gap-0.5 bg-[#f0f0f0] p-px">
                  <button aria-label="More modes" className="flex flex-1 items-center justify-center border border-[#aaa]"><svg width="7" height="4"><path d="M0 4h7L3.500 0z" /></svg></button>
                  <button aria-label="Fewer modes" className="flex flex-1 items-center justify-center border border-[#aaa]"><svg width="7" height="4"><path d="M0 0h7L3.500 4z" /></svg></button>
                </div>
              </div>
              <Check label="Ensure shielding" className="mt-[5px] h-[30px]" />
              <Select id="shielding" value="Electric" disabled className="h-[29px] border-[#bfbfbf] bg-[#ccc] text-[#888]" />
              <Check label="Polarization angle" className="mt-1 h-[32px]" />
              <input aria-label="Polarization angle value" disabled defaultValue="0.0" className="h-[29px] border border-[#ccc] bg-[#f0f0f0] px-[5px] text-[14px] text-[#8a8a8a]" />
            </div>
          </div>
        </Fieldset>
      </div>
      <svg width="14" height="14" className="absolute bottom-0 right-0" stroke="#999" strokeWidth="1.500"><path d="M1 14L14 1M6 14l8-8M11 14l3-3" /></svg>
    </div>
  );
}

/* ---------- floating tools ---------- */

function SogouLogo({ size }: { size: number }) {
  return (
    <svg width={size} height={size} viewBox="0 0 40 40">
      <g transform="rotate(-8 20 20)">
        <rect x="2" y="2" width="36" height="36" rx="6" fill="#f4551e" />
        <path d="M30 12c-5-4-17-4-18 2-1 7 18 3 17 10-1 7-13 6-20 3" fill="none" stroke="#fff" strokeWidth="6" strokeLinecap="round" />
      </g>
    </svg>
  );
}

function ImeBar() {
  return (
    <div className="absolute left-[951px] top-[194px] flex items-center">
      <div className="z-10"><SogouLogo size={42} /></div>
      <div className="-ml-2 flex h-[33px] w-[189px] items-center gap-3 border border-[#c6dcf2] bg-white pl-[13px] text-[#0a6fd8] shadow-sm">
        <span className="text-[18px] font-bold">英</span>
        <svg width="17" height="18" viewBox="0 0 17 18" fill="#0a6fd8"><circle cx="3.500" cy="5" r="2.500" /><path d="M10 9h4v4l-3 4h-1.500l1-3.500H10z" /></svg>
        <svg width="16" height="20" viewBox="0 0 16 20" fill="none" stroke="#0a6fd8" strokeWidth="2">
          <rect x="4.500" y="1" width="7" height="11" rx="3.500" fill="#0a6fd8" stroke="none" />
          <path d="M1 9c0 9 14 9 14 0M8 15v3M5 19h6" />
        </svg>
        <svg width="20" height="16" viewBox="0 0 20 16" fill="none" stroke="#0a6fd8">
          <rect x="1" y="1" width="18" height="14" rx="1.500" strokeWidth="2" />
          <path d="M3.500 5h13M3.500 8.500h13" strokeWidth="2.500" strokeDasharray="2.200 1.400" />
          <path d="M5 12h10" strokeWidth="2" />
        </svg>
        <svg width="19" height="19" viewBox="0 0 20 20">
          <defs><linearGradient id="shirt" x1="0" y1="0" x2="0" y2="1"><stop offset="0" stopColor="#4a6df2" /><stop offset=".5" stopColor="#a56ab8" /><stop offset="1" stopColor="#ff7a45" /></linearGradient></defs>
          <path d="M1 2l6-2c1 3 5 3 6 0l6 2v7h-3v10H4V9H1z" fill="url(#shirt)" />
        </svg>
        <svg width="18" height="18" viewBox="0 0 18 18" fill="#0a6fd8">
          <rect width="8" height="8" rx="2.500" /><rect y="9.500" width="8" height="8" rx="2.500" /><rect x="9.500" y="9.500" width="8" height="8" rx="2.500" />
          <circle cx="13.500" cy="4" r="2.900" fill="none" stroke="#0a6fd8" strokeWidth="2.200" />
        </svg>
      </div>
    </div>
  );
}

function UploadPill() {
  return (
    <button className="absolute left-[1660px] top-10 flex h-10 w-[160px] items-stretch overflow-hidden rounded-lg border-2 border-[#1aa0ff] bg-[#eff8ff] text-[15px] text-[#1691f5]">
      <span className="flex w-[43px] items-center justify-center bg-[#0b93ff] pr-0.5">
        <svg width="28" height="24" viewBox="0 0 28 24" fill="none" stroke="#fff" strokeWidth="3.500">
          <circle cx="14" cy="7" r="5" /><circle cx="7.500" cy="16" r="5" /><circle cx="20.500" cy="16" r="5" />
        </svg>
      </span>
      <span className="flex flex-1 items-center justify-center pr-1">拖拽上传</span>
    </button>
  );
}

/* ---------- taskbar ---------- */

function Knight() {
  return (
    <svg width="96" height="45" viewBox="0 0 96 45">
      <path d="M55 2C30-2 20 12 12 20l6 1-12 4 9 3-12 5 8 2-8 5 12 2-4 3h20c4-18 12-28 26-34z" fill="#d9432a" />
      <path d="M50 5C34 6 26 20 22 40l6 4c2-18 10-28 24-34z" fill="#a81c1c" />
      <path d="M20 45C16 24 30 13 46 12c20 0 34 14 32 33z" fill="#b9b9b7" />
      <path d="M26 45c-4-18 8-28 21-28s27 10 23 28z" fill="#dcdcda" />
      <path d="M42 8h11v20H42z" fill="#a8a8a6" />
      <path d="M45 8h5v20h-5z" fill="#e8e8e6" />
      <circle cx="47.500" cy="8" r="8" fill="#cfcfcd" />
      <circle cx="45" cy="5" r="3.500" fill="#f3f3f2" />
      <ellipse cx="48" cy="30" rx="6" ry="7" fill="#999" stroke="#777" />
      <circle cx="37" cy="32" r="3.500" fill="#a8a8a6" stroke="#777" /><circle cx="59" cy="32" r="3.500" fill="#a8a8a6" stroke="#777" />
      <path d="M30 45c0-8 10-9 18-2 8-7 19-6 19 2z" fill="#eab890" stroke="#777" strokeWidth="1.500" />
      <path d="M74 45l3-12 4 4 2-14 3 14 6-12-4 16 5-3-6 7zM22 45l-3-12-3 3-2-14-1 16-5-4 4 11z" fill="#9b9b99" />
    </svg>
  );
}

function Slot({ label, active, children }: { label: string; active?: boolean; children: ReactNode }) {
  return (
    <button aria-label={label} className={`flex h-full w-[62px] items-center justify-center ${active ? "border-b-[3px] border-[#76b9ed] bg-[#4d4f51] pt-[3px]" : ""}`}>
      {children}
    </button>
  );
}

function Taskbar() {
  return (
    <footer className="flex h-[50px] shrink-0 items-center bg-[#202224] text-white">
      <button aria-label="Start" className="flex w-[60px] justify-center">
        <svg width="21" height="21" viewBox="0 0 21 21" fill="#fff"><path d="M0 3l9-1v8H0zM10 2l11-2v10H10zM0 11h9v8l-9-1zM10 11h11v10l-11-2z" /></svg>
      </button>
      <div className="flex h-[49px] w-[360px] items-center overflow-hidden border border-[#bfbfbf] bg-[#f1f1f1] pl-3.5 text-[19px] text-[#222]">
        <svg width="22" height="22" viewBox="0 0 22 22" fill="none" stroke="#222" strokeWidth="1.600"><circle cx="14" cy="8" r="6.500" /><path d="M9 13l-8 8" /></svg>
        <span className="flex-1 pl-[13px]">搜索</span>
        <div className="mr-1 self-end"><Knight /></div>
      </div>
      <div className="flex h-full pl-[3px]">
        <button aria-label="Edge" className="relative flex h-full w-[62px] items-center justify-center">
          <svg width="31" height="31" viewBox="0 0 32 32">
            <circle cx="16" cy="16" r="15.500" fill="#1580d4" />
            <path d="M1 12C4-3 30-4 31.500 14c0 6-5 8-10 7-3-1-4-2-2-5 1-8-12-10-18-4z" fill="#3fc8a4" />
            <path d="M18 1c9 1 14 8 13.500 14-1 5-5 7-10 6-3-1-4-2-2-5 2-5-1-9-5-11z" fill="#6be05a" opacity=".7" />
            <path d="M1 14c6-8 17-6 17 1-5 1-7 11 4 14C8 36-1 24 1 14z" fill="#0f62b4" />
            <path d="M18 15c-7 4-1 12 11 9-6 9-22 3-17-6 1-2 3-3 6-3z" fill="#202224" />
            <path d="M19 16c-4 3 1 8 10 7-5 5-16 2-15-4 0-2 2-3 5-3z" fill="#124a94" />
          </svg>
          <span className="absolute inset-x-[6px] bottom-0 h-[3px] bg-[#76b9ed]" />
        </button>
        <Slot label="File Explorer">
          <svg width="28" height="24" viewBox="0 0 28 24"><path d="M0 0h12l2 3h14v20H0z" fill="#e0a30e" /><path d="M0 5h12l2-2h14v20H0z" fill="#ffd667" /><path d="M5 24v-9l2-3h14l2 3v9h-5v-6h-8v6z" fill="#3f96dc" /></svg>
        </Slot>
        <Slot label="Mail">
          <svg width="30" height="28" viewBox="0 0 30 28"><path d="M0 9l15-9 15 9v4H0z" fill="#0b5fae" /><path d="M3 9h24l-12 9z" fill="#f4f4f4" /><path d="M0 9l15 9 15-9v19H0z" fill="#1e9fe4" /><path d="M30 9L0 28h30z" fill="#4fd0f4" /></svg>
        </Slot>
        <Slot label="Word">
          <svg width="30" height="27" viewBox="0 0 30 27"><path d="M8 0h22v27H8z" fill="#185abd" /><path d="M8 0h22v7H8z" fill="#41a5ee" /><path d="M8 7h22v7H8z" fill="#2b7cd3" /><rect y="6" width="16" height="16" rx="1.500" fill="#1b4fa8" /><text x="8" y="18.500" fontSize="12" fontWeight="700" textAnchor="middle" fill="#fff">W</text></svg>
        </Slot>
        <Slot label="myHP">
          <span className="flex h-[30px] w-[30px] items-center justify-center rounded-sm bg-[#0096d6] text-[11px] font-semibold">my<i>hp</i></span>
        </Slot>
        <Slot label="WeChat">
          <svg width="32" height="26" viewBox="0 0 32 26"><path d="M12 0c16 0 15 20-1 19l-7 3 1-5C-4 10 1 0 12 0z" fill="#2bcf69" /><path d="M22 9c13 0 12 13 5 14v3l-4-2c-13 0-12-15-1-15z" fill="#ececec" /><g fill="#1b6a3a"><circle cx="8" cy="7" r="1.500" /><circle cx="15" cy="7" r="1.500" /><circle cx="19" cy="14" r="1.200" /><circle cx="25" cy="14" r="1.200" /></g></svg>
        </Slot>
        <Slot label="Browser">
          <svg width="30" height="30" viewBox="0 0 30 30"><circle cx="15" cy="15" r="14.500" fill="#2aa14c" /><path d="M11 15c-5 0-6 7-1 7 7 0 3-14 9-14 5 0 5 7 0 7" fill="none" stroke="#143f22" strokeWidth="2.800" strokeLinecap="round" /></svg>
        </Slot>
        <Slot label="bilibili">
          <svg width="30" height="30" viewBox="0 0 30 30"><rect width="30" height="30" rx="6" fill="#ff4f86" /><rect x="5" y="8" width="20" height="16" rx="4" fill="none" stroke="#ff9dbd" strokeWidth="2" /><path d="M9 3l4 4M21 3l-4 4" stroke="#ff9dbd" strokeWidth="2" /><text x="15" y="19" fontSize="8" fontWeight="800" textAnchor="middle" fill="#fff">bilibili</text></svg>
        </Slot>
        <Slot label="QQ Music">
          <svg width="30" height="30" viewBox="0 0 30 30"><circle cx="15" cy="15" r="14.500" fill="#ffdc00" /><path d="M10 4c4 2 8 2 13-3-1 5-4 8-6 8l4 12c1 8-13 9-12 1 1-4 5-5 7-5L12 10z" fill="#13b865" /></svg>
        </Slot>
        <Slot label="CST Studio Suite" active>
          <svg width="30" height="30" viewBox="0 0 30 30"><path d="M0 0h30v30H0z" fill="#04156b" /><path d="M20 5H4v11h14v4H9M20 10H11M11 11h15v14H14" fill="none" stroke="#fff" strokeWidth="2.800" /></svg>
        </Slot>
      </div>
      <div className="flex flex-1 justify-end pr-[130px]">
        <button aria-label="Support">
          <svg width="30" height="28" viewBox="0 0 30 28"><circle cx="13" cy="14" r="13" fill="#fff" /><circle cx="13" cy="14" r="10.500" fill="#0f9be0" /><text x="13" y="21" fontSize="20" fontWeight="700" textAnchor="middle" fill="#fff">?</text><circle cx="23.500" cy="20" r="6" fill="#f6ae27" /><text x="23.500" y="24" fontSize="10" fontWeight="700" textAnchor="middle" fill="#fff">i</text></svg>
        </button>
      </div>
      <div className="flex items-center text-[17px]">
        <svg width="32" height="30" viewBox="0 0 32 30"><path d="M6 19c-9-1-7-11 0-11C8-1 22-2 24 7c9 0 9 12 1 12z" fill="#dfe7f5" /><circle cx="27" cy="4" r="4" fill="#c42b1c" /><path d="M1 23h18M22 23h9M1 28h30" stroke="#9cc0dd" strokeWidth="2.200" /></svg>
        <span className="ml-[9px] w-[49px]">12°C</span>
        <span className="w-12 pl-px text-[18px]">雾</span>
        <svg width="17" height="11" fill="none" stroke="#fff" strokeWidth="1.600"><path d="M1 10l7.500-8L16 10" /></svg>
        <svg width="22" height="22" viewBox="0 0 22 22" className="ml-3" fill="none" stroke="#fff" strokeWidth="1.500"><path d="M2 4l17-3v10M2 4v14l9 1" /><path d="M7 13c0-6 5-7 7-4M14 5v4h-4M7 11v4h3" /><circle cx="17" cy="17" r="4.500" fill="#ff9a1f" stroke="none" /></svg>
        <svg width="20" height="20" viewBox="0 0 20 20" className="ml-2.5"><circle cx="10" cy="10" r="9.500" fill="#16508c" /><circle cx="13" cy="7" r="3.500" fill="none" stroke="#fff" strokeWidth="1.800" /><path d="M0 11l7 3 4-4" fill="none" stroke="#fff" strokeWidth="2.500" /><circle cx="7" cy="14" r="2.800" fill="#fff" /></svg>
        <svg width="20" height="12" viewBox="0 0 20 12" className="ml-2.5"><path d="M.7.7h16v10.600H.700z" fill="none" stroke="#fff" strokeWidth="1.400" /><path d="M3 3h8v6H3zM17.500 4h2v4h-2z" fill="#fff" /></svg>
        <span className="ml-2.5 text-[18px]">英</span>
        <span className="ml-3.5"><SogouLogo size={22} /></span>
        <div className="ml-[18px] w-[84px] text-center text-[16px] leading-6">
          <div>10:58</div>
          <div>2023/3/24</div>
        </div>
        <div className="ml-5 h-8 w-[44px]">
          <svg width="32" height="32" viewBox="0 0 32 32"><path d="M0 2h20v17H10l-4 4v-4H0z" fill="#fff" /><path d="M3 7h14M3 11h14M3 15h9" stroke="#202224" strokeWidth="1.500" /><circle cx="20" cy="22" r="9.500" fill="#2b2d2f" stroke="#aaa" /><text x="20" y="27" fontSize="13" fontWeight="600" textAnchor="middle" fill="#fff">2</text></svg>
        </div>
        <div className="h-[50px] w-1.5 border-l border-[#666]" />
      </div>
    </footer>
  );
}

export default function App() {
  return (
    <div className={`relative flex h-screen flex-col overflow-hidden bg-[#f0f0f0] ${UI}`}>
      <TitleBar />
      <Ribbon />
      <div className="flex min-h-0 flex-1">
        <NavigationTree />
        <main className="ml-[5px] flex min-w-0 flex-1 flex-col">
          <Viewport />
          <div className="mt-[5px] flex h-[320px] shrink-0 gap-[5px]">
            <ParameterPanel />
            <MessagePanel />
          </div>
        </main>
      </div>
      <StatusBar />
      <Taskbar />
      <PortDialog />
      <ImeBar />
      <UploadPill />
    </div>
  );
}
